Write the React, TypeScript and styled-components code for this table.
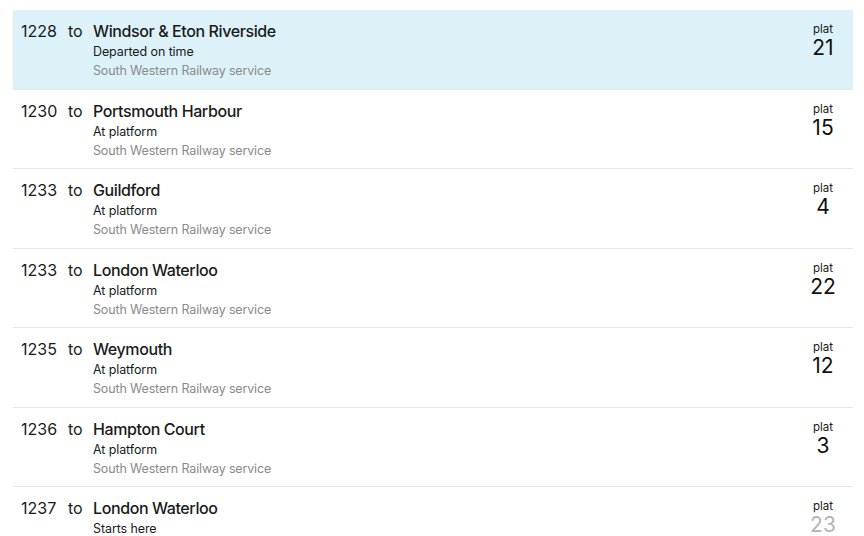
import React from 'react'
import styled, { createGlobalStyle } from 'styled-components'

const GlobalStyle = createGlobalStyle`
  body {
    margin: 0;
    background: #ffffff;
    font-family: Inter, "Noto Sans", sans-serif;
    color: #1a1a1a;
  }
`

const Board = styled.div`
  padding: 10px 11px 0 13px;
`

const Row = styled.div<{ highlighted: boolean }>`
  display: flex;
  align-items: flex-start;
  height: 79.5px;
  box-sizing: border-box;
  padding: 11px 8px 0 8px;
  border-bottom: 1px solid #e6e6e6;
  background-color: ${({ highlighted }) => highlighted ? '#dcf1f8' : 'transparent'};
`

const Time = styled.span`
  width: 47px;
  font-size: 16px;
  line-height: 20px;
`

const To = styled.span`
  width: 25px;
  font-size: 16px;
  line-height: 20px;
`

const Details = styled.div`
  flex: 1;
  display: flex;
  flex-direction: column;
`

const Destination = styled.span`
  font-size: 16px;
  line-height: 20px;
  font-weight: 500;
  letter-spacing: -0.4px;
`

const Status = styled.span`
  font-size: 12.5px;
  line-height: 20px;
  margin-top: 1px;
  letter-spacing: -0.1px;
`

const Operator = styled.span`
  font-size: 12.5px;
  line-height: 18px;
  color: #8a8a8a;
  letter-spacing: -0.15px;
`

const Platform = styled.div`
  display: flex;
  flex-direction: column;
  align-items: center;
  width: 24px;
  margin-right: 10px;
  margin-top: 1px;
`

const PlatLabel = styled.span`
  font-size: 11.5px;
  line-height: 14px;
`

const PlatNumber = styled.span<{ confirmed: boolean }>`
  font-size: 21px;
  line-height: 24px;
  color: ${({ confirmed }) => confirmed ? '#111111' : '#b5b5b5'};
`

type Service = {
  time: string
  destination: string
  status: string
  platform: string
  confirmed: boolean
}

const services: Service[] = [
  { time: '1228', destination: 'Windsor & Eton Riverside', status: 'Departed on time', platform: '21', confirmed: true },
  { time: '1230', destination: 'Portsmouth Harbour', status: 'At platform', platform: '15', confirmed: true },
  { time: '1233', destination: 'Guildford', status: 'At platform', platform: '4', confirmed: true },
  { time: '1233', destination: 'London Waterloo', status: 'At platform', platform: '22', confirmed: true },
  { time: '1235', destination: 'Weymouth', status: 'At platform', platform: '12', confirmed: true },
  { time: '1236', destination: 'Hampton Court', status: 'At platform', platform: '3', confirmed: true },
  { time: '1237', destination: 'London Waterloo', status: 'Starts here', platform: '23', confirmed: false }
]

const App: React.FC = () => {
  return (
    <>
      <GlobalStyle />
      <Board>
        {services.map((s, i) => (
          <Row key={i} highlighted={i === 0}>
            <Time>{s.time}</Time>
            <To>to</To>
            <Details>
              <Destination>{s.destination}</Destination>
              <Status>{s.status}</Status>
              <Operator>South Western Railway service</Operator>
            </Details>
            <Platform>
              <PlatLabel>plat</PlatLabel>
              <PlatNumber confirmed={s.confirmed}>{s.platform}</PlatNumber>
            </Platform>
          </Row>
        ))}
      </Board>
    </>
  )
}

export default App
